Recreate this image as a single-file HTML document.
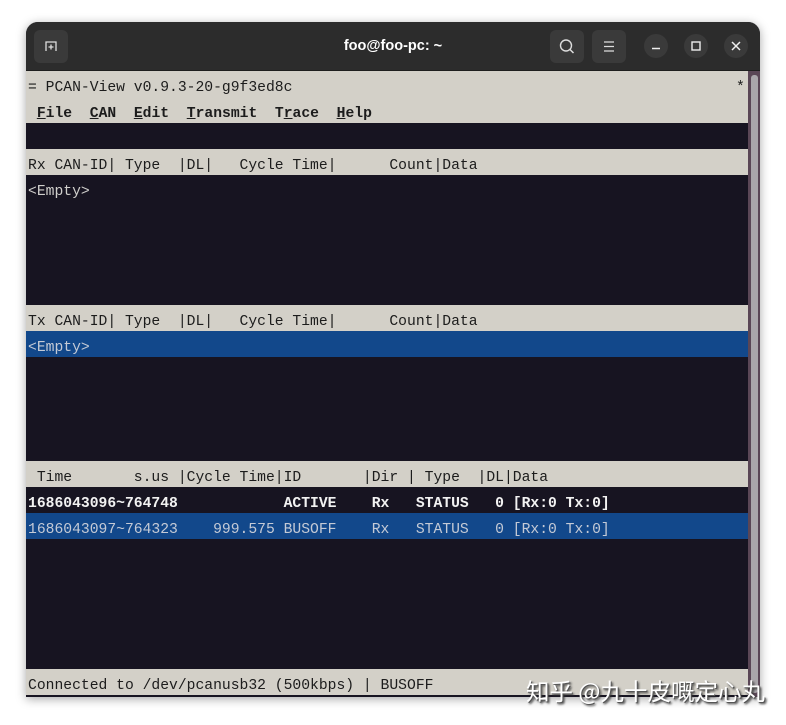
<!DOCTYPE html>
<html><head><meta charset="utf-8"><style>
html,body{margin:0;padding:0;width:786px;height:725px;background:#fff;overflow:hidden;position:relative}
.win{position:absolute;left:26px;top:22px;width:734px;height:675px;border-radius:12px 12px 0 0;overflow:hidden;box-shadow:0 2px 10px rgba(0,0,0,.35);background:#171421}
.tb{position:absolute;left:0;top:0;width:734px;height:48px;background:#2c2c2c;border-bottom:1px solid #1e1e1e}
.btn{position:absolute;top:8px;width:34px;height:33px;border-radius:6px;background:#3a3a3a}
.cb{position:absolute;top:12px;width:24px;height:24px;border-radius:50%;background:#3a3a3a}
.title{position:absolute;left:0;width:734px;top:16px;text-align:center;color:#fff;font:bold 14.5px "Liberation Sans",sans-serif}
.term{position:absolute;left:0;top:49px;width:722px;height:626px}
.r{position:absolute;left:2px;width:720px;height:26px;font:14.7px "Liberation Mono",monospace;line-height:34px;white-space:pre;color:#d0cfcc;overflow:hidden}
.l{background:#d3d0c8;color:#1c1c1c;left:0;padding-left:2px;width:720px}
.s{background:#12488b;color:#c4cad6;left:0;padding-left:2px;width:720px}
.b{font-weight:bold;color:#f2f2f2}
u{text-decoration:underline}
.sb{position:absolute;left:722px;top:49px;width:12px;height:626px;background:#5a4656}
.th{position:absolute;left:3px;top:4px;width:7px;height:618px;border-radius:3px;background:#aaa6ab}
.wm{position:absolute;left:526px;top:674px;font:23.5px "Noto Sans CJK SC",sans-serif;line-height:32px;color:#fff;text-shadow:1px 1px 0 #555,2px 2px 2px #333;white-space:nowrap}
</style></head><body>
<div class="win">
<div class="tb">
 <div class="btn" style="left:8px"><svg width="34" height="33" viewBox="0 0 34 33"><path d="M12 21V12h10v9M17 14.5v5M14.5 17h5" stroke="#ddd" stroke-width="1.3" fill="none"/></svg></div>
 <div class="title">foo@foo-pc: ~</div>
 <div class="btn" style="left:524px"><svg width="34" height="33" viewBox="0 0 34 33"><circle cx="16" cy="15.5" r="5.5" stroke="#ddd" stroke-width="1.4" fill="none"/><path d="M20 19.5l3.5 3.5" stroke="#ddd" stroke-width="1.5"/></svg></div>
 <div class="btn" style="left:566px"><svg width="34" height="33" viewBox="0 0 34 33"><path d="M12 12h10M12 16.5h10M12 21h10" stroke="#ddd" stroke-width="1.3"/></svg></div>
 <div class="cb" style="left:618px"><svg width="24" height="24"><path d="M8 14.5h8" stroke="#eee" stroke-width="1.5"/></svg></div>
 <div class="cb" style="left:658px"><svg width="24" height="24"><rect x="8" y="8" width="8" height="8" stroke="#eee" stroke-width="1.4" fill="none"/></svg></div>
 <div class="cb" style="left:698px"><svg width="24" height="24"><path d="M8 8l8 8M16 8l-8 8" stroke="#eee" stroke-width="1.5"/></svg></div>
</div>
<div class="term">
<div class="r l" style="top:0">= PCAN-View v0.9.3-20-g9f3ed8c<span style="position:absolute;left:710px;top:0">*</span></div>
<div class="r l" style="top:26px;font-weight:bold"> <u>F</u>ile  <u>C</u>AN  <u>E</u>dit  <u>T</u>ransmit  T<u>r</u>ace  <u>H</u>elp</div>
<div class="r l" style="top:78px">Rx CAN-ID| Type  |DL|   Cycle Time|      Count|Data</div>
<div class="r" style="top:104px">&lt;Empty&gt;</div>
<div class="r l" style="top:234px">Tx CAN-ID| Type  |DL|   Cycle Time|      Count|Data</div>
<div class="r s" style="top:260px">&lt;Empty&gt;</div>
<div class="r l" style="top:390px"> Time       s.us |Cycle Time|ID       |Dir | Type  |DL|Data</div>
<div class="r b" style="top:416px">1686043096~764748            ACTIVE    Rx   STATUS   0 [Rx:0 Tx:0]</div>
<div class="r s" style="top:442px">1686043097~764323    999.575 BUSOFF    Rx   STATUS   0 [Rx:0 Tx:0]</div>
<div class="r l" style="top:598px">Connected to /dev/pcanusb32 (500kbps) | BUSOFF</div>
</div>
<div class="sb"><div class="th"></div></div>
</div>
<div class="wm">知乎 @九十皮嘅定心丸</div>
</body></html>
